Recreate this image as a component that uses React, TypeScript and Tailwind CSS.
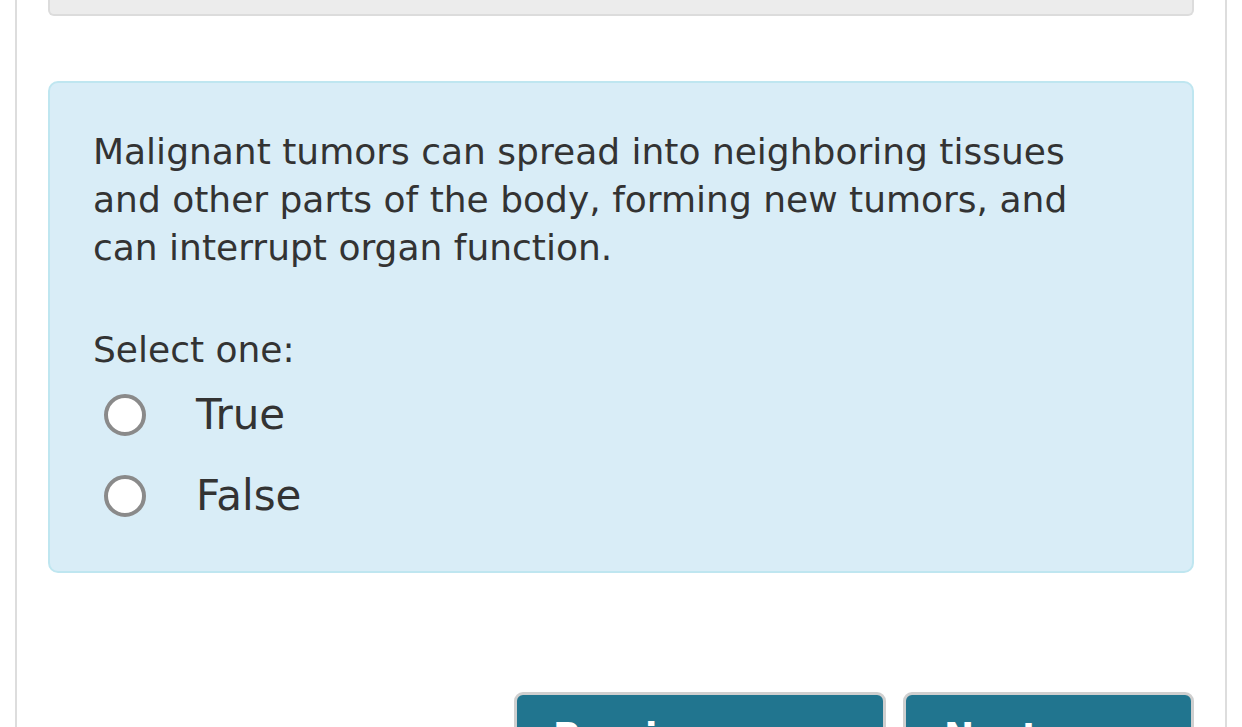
import React from "react";

export default function App() {
  const font = { fontFamily: '"DejaVu Sans", Verdana, sans-serif' };
  return (
    <div className="w-[1242px] h-[727px] overflow-hidden bg-white" style={font}>
      <div className="ml-[15px] w-[1212px] h-[900px] border-x-2 border-[#dddddd] px-[31px]">
        <div className="h-[16px] rounded-b-[6px] border-2 border-t-0 border-[#dcdcdc] bg-[#ececec]" />
        <div className="mt-[65px] h-[492px] rounded-[10px] border-2 border-[#bfe6f0] bg-[#d9edf7] pl-[43px] pr-[90px] pt-[45px] text-[#333333]">
          <p className="text-[36px] leading-[48px]">
            Malignant tumors can spread into neighboring tissues and other parts of the body, forming new tumors, and can interrupt organ function.
          </p>
          <div className="mt-[54px] text-[36px] leading-[48px]">Select one:</div>
          <div className="flex flex-col">
            {["True", "False"].map((label) => (
              <label key={label} className="flex h-[81px] items-center">
                <span className="ml-[11px] h-[42px] w-[42px] rounded-full border-[4px] border-[#8a8a8a] bg-white" />
                <span className="ml-[50px] text-[42px] leading-[48px]">{label}</span>
              </label>
            ))}
          </div>
        </div>
        <div className="mt-[119px] flex justify-end gap-[17px]">
          <div className="h-[90px] w-[372px] rounded-[9px] border-[3px] border-[#cfcfcf] bg-[#21758f] pl-[36px] pt-[19px] text-[36px] font-bold leading-[44px] text-white">
            Previous page
          </div>
          <div className="h-[90px] w-[291px] rounded-[9px] border-[3px] border-[#cfcfcf] bg-[#21758f] pl-[38px] pt-[19px] text-[36px] font-bold leading-[44px] text-white">
            Next page
          </div>
        </div>
      </div>
    </div>
  );
}
